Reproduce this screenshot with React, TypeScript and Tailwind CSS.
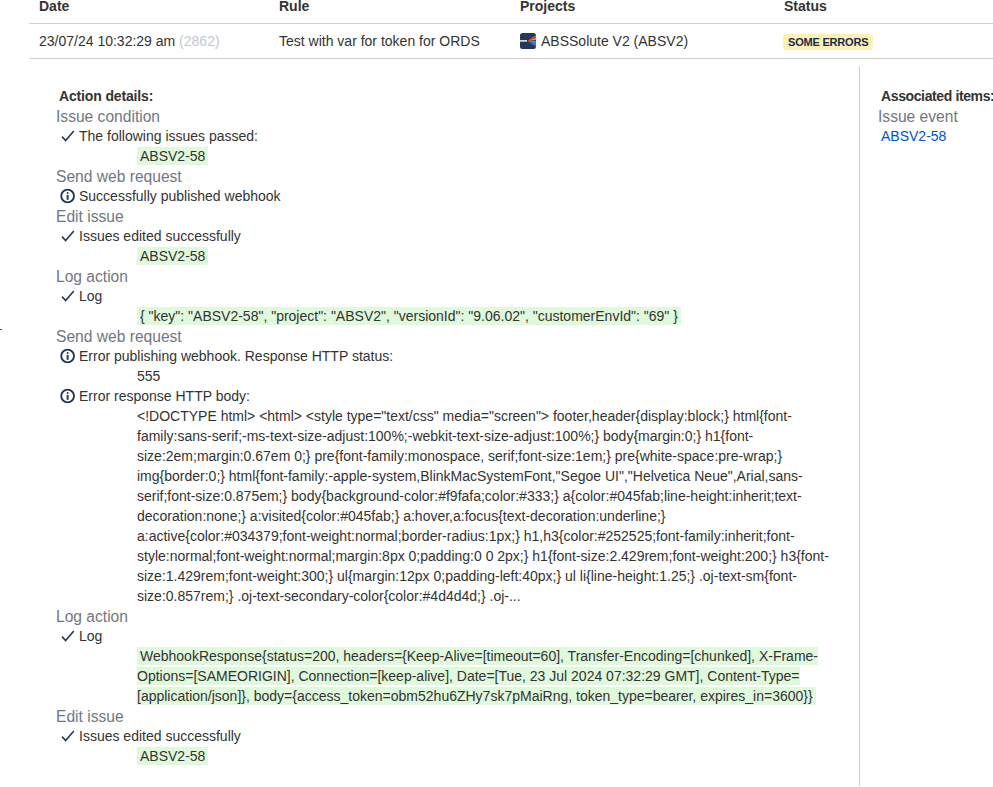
import type { ReactNode } from "react";

function Heading({ children }: { children: ReactNode }) {
  return <div className="h-5 text-[15.6px] leading-[22px] text-[#707780]">{children}</div>;
}

function CheckIcon() {
  return (
    <svg width="16" height="16" viewBox="0 0 16 16" className="shrink-0">
      <path d="M2 8.6 5.6 12.6 13.8 3" fill="none" stroke="#253858" strokeWidth="1.6" />
    </svg>
  );
}

function InfoIcon() {
  return (
    <svg width="16" height="16" viewBox="0 0 16 16" className="shrink-0">
      <circle cx="7.6" cy="8" r="6.4" fill="none" stroke="#253858" strokeWidth="1.9" />
      <rect x="6.6" y="7" width="2" height="4.8" fill="#253858" />
      <rect x="6.6" y="4" width="2" height="2" rx="1" fill="#253858" />
    </svg>
  );
}

function Message({ icon, children }: { icon: "check" | "info"; children: ReactNode }) {
  return (
    <div className="flex h-5 items-center gap-[3px] pl-1 leading-5">
      {icon === "check" ? <CheckIcon /> : <InfoIcon />}
      <span>{children}</span>
    </div>
  );
}

function Value({ children }: { children: ReactNode }) {
  return <div className="w-[779px] pl-[81px] leading-5">{children}</div>;
}

function Mark({ children }: { children: ReactNode }) {
  return <span className="bg-[#e0f8dc] py-px pl-[3px] pr-[3px]">{children}</span>;
}

function ProjectLogo() {
  return (
    <svg width="16" height="16" viewBox="0 0 16 16" className="shrink-0">
      <rect width="16" height="16" rx="2.5" fill="#253858" />
      <path d="M0 7.2h7v1.4H0z" fill="#fff" />
      <path d="M7 8 16 2v3z" fill="#e5493a" />
      <path d="M7 8 16 5v2z" fill="#f79232" />
      <path d="M7 8h9v1.5z" fill="#36b37e" />
      <path d="M7 8 16 9.5V12z" fill="#2684ff" />
      <path d="M7 8 16 12v2z" fill="#6554c0" />
    </svg>
  );
}

export default function App() {
  return (
    <div className="relative h-[787px] w-[993px] overflow-hidden bg-white font-['Liberation_Sans',Arial,sans-serif] text-[14px] text-[#333]">
      <span className="absolute left-0 top-[329px] h-px w-[2px] bg-[#42526e]"></span>

      <div className="ml-[29px]">
        <div className="grid h-6 grid-cols-[240px_241px_264px_1fr] border-b border-[#d0d0d0] pl-[10px] font-bold leading-[12px] text-[#333]">
          <span>Date</span>
          <span>Rule</span>
          <span>Projects</span>
          <span>Status</span>
        </div>
        <div className="grid h-[35px] grid-cols-[240px_241px_264px_1fr] items-center border-b border-[#d0d0d0] pl-[10px]">
          <span>
            23/07/24 10:32:29 am <span className="text-[#c1c7d0]">(2862)</span>
          </span>
          <span>Test with var for token for ORDS</span>
          <span className="flex items-center gap-[5px]">
            <ProjectLogo />
            ABSSolute V2 (ABSV2)
          </span>
          <span>
            <span className="-ml-px inline-block h-4 rounded-[3px] bg-[#fff0b3] px-[5px] text-[11px] font-bold leading-[16px] tracking-[-0.2px] text-[#172b4d]">
              SOME ERRORS
            </span>
          </span>
        </div>
      </div>

      <div className="mt-[7px] flex">
        <div className="h-[720px] w-[860px] shrink-0 border-r border-[#d0d0d0] pl-[56px] pt-5">
          <div className="h-5 pl-[3px] font-bold leading-5 tracking-[-0.15px]">Action details:</div>
          <Heading>Issue condition</Heading>
          <Message icon="check">The following issues passed:</Message>
          <Value>
            <Mark>ABSV2-58</Mark>
          </Value>
          <Heading>Send web request</Heading>
          <Message icon="info">Successfully published webhook</Message>
          <Heading>Edit issue</Heading>
          <Message icon="check">Issues edited successfully</Message>
          <Value>
            <Mark>ABSV2-58</Mark>
          </Value>
          <Heading>Log action</Heading>
          <Message icon="check">Log</Message>
          <Value>
            <Mark>
              {'{ "key": "ABSV2-58", "project": "ABSV2", "versionId": "9.06.02", "customerEnvId": "69" }'}
            </Mark>
          </Value>
          <Heading>Send web request</Heading>
          <Message icon="info">Error publishing webhook. Response HTTP status:</Message>
          <Value>555</Value>
          <Message icon="info">Error response HTTP body:</Message>
          <Value>
            {
              '<!DOCTYPE html> <html> <style type="text/css" media="screen"> footer,header{display:block;} html{font-family:sans-serif;-ms-text-size-adjust:100%;-webkit-text-size-adjust:100%;} body{margin:0;} h1{font-size:2em;margin:0.67em 0;} pre{font-family:monospace, serif;font-size:1em;} pre{white-space:pre-wrap;} img{border:0;} html{font-family:-apple-system,BlinkMacSystemFont,"Segoe UI","Helvetica Neue",Arial,sans-serif;font-size:0.875em;} body{background-color:#f9fafa;color:#333;} a{color:#045fab;line-height:inherit;text-decoration:none;} a:visited{color:#045fab;} a:hover,a:focus{text-decoration:underline;} a:active{color:#034379;font-weight:normal;border-radius:1px;} h1,h3{color:#252525;font-family:inherit;font-style:normal;font-weight:normal;margin:8px 0;padding:0 0 2px;} h1{font-size:2.429rem;font-weight:200;} h3{font-size:1.429rem;font-weight:300;} ul{margin:12px 0;padding-left:40px;} ul li{line-height:1.25;} .oj-text-sm{font-size:0.857rem;} .oj-text-secondary-color{color:#4d4d4d;} .oj-...'
            }
          </Value>
          <Heading>Log action</Heading>
          <Message icon="check">Log</Message>
          <Value>
            <Mark>
              WebhookResponse{"{"}status=200, headers={"{"}Keep-Alive=[timeout=60], Transfer-Encoding=[chunked], X-Frame-Options=[SAMEORIGIN], Connection=[keep-alive], Date=[Tue, 23 Jul 2024 07:32:29 GMT], Content-Type=[application/json]{"}"}, body={"{"}access_token=obm52hu6ZHy7sk7pMaiRng, token_type=bearer, expires_in=3600{"}}"}
            </Mark>
          </Value>
          <Heading>Edit issue</Heading>
          <Message icon="check">Issues edited successfully</Message>
          <Value>
            <Mark>ABSV2-58</Mark>
          </Value>
        </div>
        <div className="pl-[18px] pt-5">
          <div className="h-5 whitespace-nowrap pl-[3px] font-bold leading-5 tracking-[-0.38px]">Associated items:</div>
          <Heading>Issue event</Heading>
          <div className="pl-[3px] leading-5 text-[#0052cc]">ABSV2-58</div>
        </div>
      </div>
    </div>
  );
}
